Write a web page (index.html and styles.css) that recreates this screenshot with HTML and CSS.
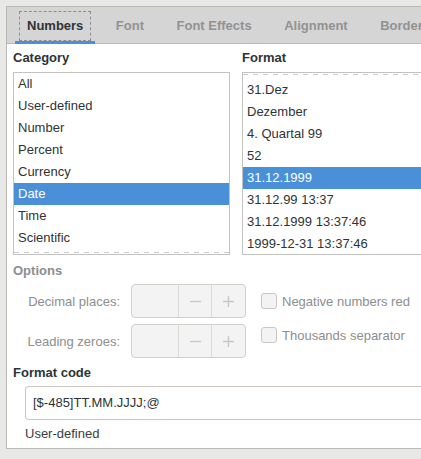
FILE: index.html
```html
<!DOCTYPE html>
<html>
<head>
<meta charset="utf-8">
<link rel="stylesheet" href="styles.css">
</head>
<body>
<div class="notebook">
  <div class="tabs">
    <div class="tab active"><span class="tab-label">Numbers</span></div>
    <div class="tab"><span class="tab-label">Font</span></div>
    <div class="tab"><span class="tab-label">Font Effects</span></div>
    <div class="tab"><span class="tab-label">Alignment</span></div>
    <div class="tab"><span class="tab-label">Borders</span></div>
  </div>
  <div class="page">
    <div class="lists">
      <div class="col">
        <div class="heading list-heading">Category</div>
        <div class="listbox undershoot-bottom">
          <div class="row">All</div>
          <div class="row">User-defined</div>
          <div class="row">Number</div>
          <div class="row">Percent</div>
          <div class="row">Currency</div>
          <div class="row selected">Date</div>
          <div class="row">Time</div>
          <div class="row">Scientific</div>
        </div>
      </div>
      <div class="col">
        <div class="heading list-heading">Format</div>
        <div class="listbox format undershoot-top">
          <div class="row">31.Dez</div>
          <div class="row">Dezember</div>
          <div class="row">4. Quartal 99</div>
          <div class="row">52</div>
          <div class="row selected">31.12.1999</div>
          <div class="row">31.12.99 13:37</div>
          <div class="row">31.12.1999 13:37:46</div>
          <div class="row">1999-12-31 13:37:46</div>
        </div>
      </div>
    </div>

    <div class="heading disabled options-heading">Options</div>
    <div class="options">
      <div class="spin-grid">
        <span class="opt-label">Decimal places:</span>
        <div class="spin">
          <span class="spin-entry"></span>
          <span class="spin-btn minus"><svg width="11" height="11" viewBox="0 0 11 11"><path d="M0 5.5h11" stroke="#c6c6c6" stroke-width="1.3"/></svg></span>
          <span class="spin-btn plus"><svg width="11" height="11" viewBox="0 0 11 11"><path d="M0 5.5h11M5.5 0v11" stroke="#c6c6c6" stroke-width="1.3"/></svg></span>
        </div>
        <span class="opt-label">Leading zeroes:</span>
        <div class="spin">
          <span class="spin-entry"></span>
          <span class="spin-btn minus"><svg width="11" height="11" viewBox="0 0 11 11"><path d="M0 5.5h11" stroke="#c6c6c6" stroke-width="1.3"/></svg></span>
          <span class="spin-btn plus"><svg width="11" height="11" viewBox="0 0 11 11"><path d="M0 5.5h11M5.5 0v11" stroke="#c6c6c6" stroke-width="1.3"/></svg></span>
        </div>
      </div>
      <div class="checks">
        <div class="check"><span class="box"></span><span class="check-label">Negative numbers red</span></div>
        <div class="check"><span class="box"></span><span class="check-label">Thousands separator</span></div>
      </div>
    </div>

    <div class="heading code-heading">Format code</div>
    <div class="entry">[$-485]TT.MM.JJJJ;@</div>
    <div class="note">User-defined</div>
  </div>
</div>
</body>
</html>
```

FILE: styles.css
```css
html, body {
  margin: 0;
  padding: 0;
  overflow: hidden;
}

body {
  width: 421px;
  height: 459px;
  background: #e8e8e7;
  font-family: "Liberation Sans", Arial, sans-serif;
  font-size: 13px;
  color: #2e3436;
}

.notebook {
  margin: 6px 0 0 6px;
  width: 460px;
  border: 1px solid #b8b8b5;
  background: #ffffff;
}

.tabs {
  display: flex;
  align-items: flex-start;
  height: 36px;
  padding-left: 8px;
  background: #d5d5d5;
  border-bottom: 1px solid #b8b8b5;
}

.tab {
  box-sizing: border-box;
  height: 37px;
  padding: 4px 4px 0;
  margin-right: 8.5px;
  margin-bottom: -1px;
  border-bottom: 3px solid transparent;
  flex: none;
}

.tab.active {
  border-bottom-color: #4a90d9;
}

.tab-label {
  display: block;
  box-sizing: border-box;
  height: 30px;
  line-height: 28px;
  padding: 0 7px;
  border: 1px solid transparent;
  font-weight: bold;
  color: #929292;
  white-space: nowrap;
}

.tab.active .tab-label {
  border: 1px dashed #8e8e8e;
  color: #2e3436;
}

.page {
  padding: 6px 6px 6px 6px;
}

.lists {
  display: grid;
  grid-template-columns: 217px 217px;
  column-gap: 12px;
}

.heading {
  font-weight: bold;
  height: 16px;
  line-height: 16px;
}

.list-heading {
  margin-bottom: 6px;
}

.listbox {
  position: relative;
  box-sizing: border-box;
  height: 183px;
  border: 1px solid #c2c2bf;
  background: #ffffff;
  overflow: hidden;
}

.listbox.format {
  padding-top: 6px;
}

.undershoot-bottom::after,
.undershoot-top::after {
  content: "";
  position: absolute;
  left: 0;
  right: 0;
  height: 1px;
  background: repeating-linear-gradient(to right, #cbcbcb 0 5px, transparent 5px 10px);
}

.undershoot-bottom::after {
  bottom: 1px;
}

.undershoot-top::after {
  top: 1px;
}

.row {
  height: 22px;
  line-height: 22px;
  padding-left: 4px;
  white-space: nowrap;
}

.row.selected {
  background: #4a90d9;
  color: #ffffff;
}

.disabled {
  color: #8b8e8f;
}

.options-heading {
  margin-top: 8px;
}

.options {
  display: flex;
  margin-top: 5px;
  padding-left: 12px;
}

.spin-grid {
  display: grid;
  grid-template-columns: 95px 115px;
  column-gap: 11px;
  row-gap: 6px;
  align-items: center;
}

.opt-label {
  text-align: right;
  color: #8b8e8f;
  white-space: nowrap;
}

.spin {
  display: flex;
  box-sizing: border-box;
  height: 34px;
  border: 1px solid #d3cfcb;
  border-radius: 4px;
  background: #f3f3f3;
}

.spin-entry {
  flex: 0 0 46px;
}

.spin-btn {
  display: flex;
  align-items: center;
  justify-content: center;
  box-sizing: border-box;
  border-left: 1px solid #dddbd8;
}

.spin-btn.minus {
  flex: 0 0 33px;
}

.spin-btn.plus {
  flex: 0 0 33px;
}

.checks {
  margin-left: 15px;
}

.check {
  display: flex;
  align-items: center;
  gap: 5px;
  height: 34px;
}

.box {
  box-sizing: border-box;
  width: 16px;
  height: 16px;
  border: 1px solid #cac6c1;
  border-radius: 3px;
  background: #f3f3f3;
}

.check-label {
  color: #8b8e8f;
  white-space: nowrap;
}

.code-heading {
  margin-top: 7px;
}

.entry {
  box-sizing: border-box;
  height: 34px;
  margin: 5px 0 0 12px;
  padding-left: 7px;
  line-height: 32px;
  border: 1px solid #cdc8c3;
  border-right: none;
  border-radius: 4px 0 0 4px;
  background: #ffffff;
  white-space: nowrap;
}

.note {
  margin: 6px 0 0 12px;
  height: 16px;
  line-height: 16px;
  color: #3a3d3e;
}
```
